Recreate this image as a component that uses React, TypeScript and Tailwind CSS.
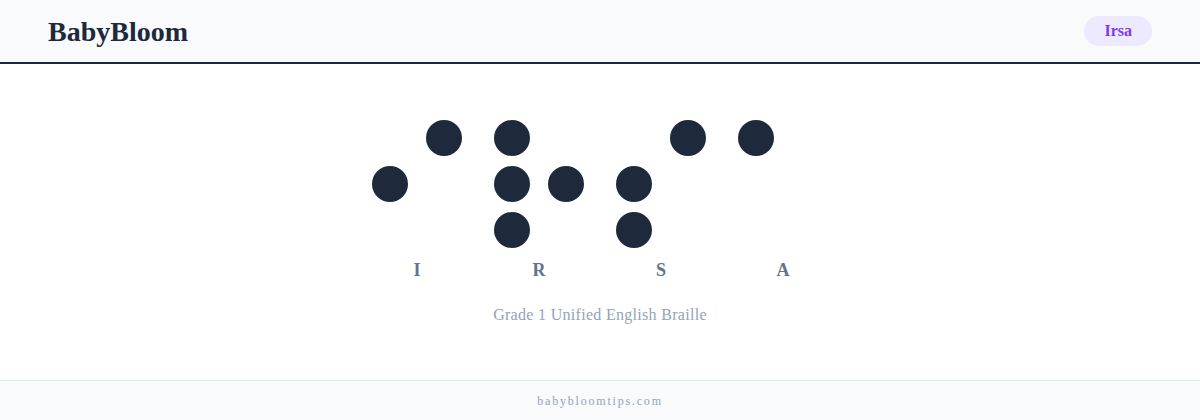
const cells: { letter: string; dots: number[] }[] = [
  { letter: "I", dots: [2, 4] },
  { letter: "R", dots: [1, 2, 3, 5] },
  { letter: "S", dots: [2, 3, 4] },
  { letter: "A", dots: [1] },
]

// braille dot numbering: left column 1-2-3, right column 4-5-6
const order = [1, 4, 2, 5, 3, 6]

function Cell({ letter, dots }: { letter: string; dots: number[] }) {
  return (
    <div className="flex flex-col items-center">
      <div className="grid grid-cols-[36px_36px] gap-x-[18px] gap-y-[10px]">
        {order.map((n) => (
          <div
            key={n}
            className={`w-9 h-9 rounded-full ${dots.includes(n) ? "bg-[#1e293b]" : "bg-transparent"}`}
          />
        ))}
      </div>
      <span className="mt-[10px] text-[18px] leading-6 font-semibold text-[#64748b]">
        {letter}
      </span>
    </div>
  )
}

export default function App() {
  return (
    <div
      className="w-[1200px] h-[420px] flex flex-col bg-white"
      style={{ fontFamily: '"Liberation Serif", "DejaVu Serif", serif' }}
    >
      <header className="h-16 shrink-0 flex items-center justify-between px-12 bg-[#f8fafc] border-b-2 border-[#1e293b]">
        <span className="text-[28px] font-bold text-[#1e293b] pt-[2px]">BabyBloom</span>
        <span className="h-[30px] px-5 flex items-center rounded-full bg-[#ede9fe] text-[#7c3aed] text-[16px] font-semibold">
          Irsa
        </span>
      </header>

      <main className="flex-1 flex flex-col items-center pt-14">
        <div className="flex gap-8">
          {cells.map((c) => (
            <Cell key={c.letter} letter={c.letter} dots={c.dots} />
          ))}
        </div>
        <p className="mt-[22px] text-[16px] leading-[22px] tracking-[0.3px] text-[#94a3b8]">
          Grade 1 Unified English Braille
        </p>
      </main>

      <footer className="h-10 shrink-0 flex items-center justify-center bg-[#f8fafc] border-t border-[#e2e8f0]">
        <span className="text-[12px] tracking-[1.8px] text-[#94a3b8]">babybloomtips.com</span>
      </footer>
    </div>
  )
}
